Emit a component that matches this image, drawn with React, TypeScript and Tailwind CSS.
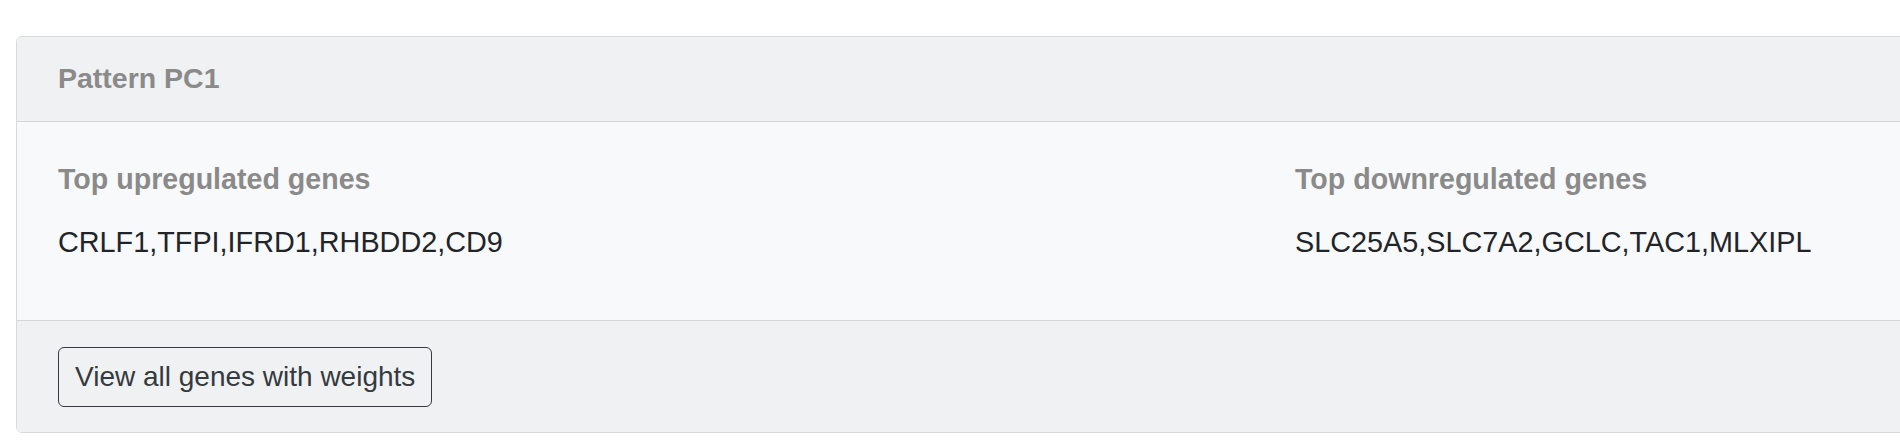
export default function App() {
  const up = ["CRLF1", "TFPI", "IFRD1", "RHBDD2", "CD9"];
  const down = ["SLC25A5", "SLC7A2", "GCLC", "TAC1", "MLXIPL"];

  return (
    <div className="w-[1900px] h-[446px] overflow-hidden bg-white font-['Liberation_Sans',Arial,sans-serif]">
      <div className="pt-[36px] pl-[16px]">
        {/* Pattern card, wider than the viewport */}
        <div className="w-[2600px] rounded-[6px] border border-[#d9dadc] overflow-hidden">
          <div className="bg-[#f0f1f2] border-b border-[#d4d6d8] px-[41px] pt-[24px] pb-[26px]">
            <h3 className="text-[28.5px] leading-[34px] font-bold text-[#8a8a8a]">Pattern PC1</h3>
          </div>

          <div className="bg-[#f8f9fa] px-[41px] pt-[40px] pb-[56px] grid grid-cols-[1237px_1fr]">
            <div>
              <h4 className="text-[28.6px] leading-[34px] font-bold text-[#8a8a8a] mb-[25px]">Top upregulated genes</h4>
              <p className="text-[28.8px] leading-[43px] text-[#212529]">{up.join(",")}</p>
            </div>
            <div>
              <h4 className="text-[28.6px] leading-[34px] font-bold text-[#8a8a8a] mb-[25px]">Top downregulated genes</h4>
              <p className="text-[28.8px] leading-[43px] text-[#212529]">{down.join(",")}</p>
            </div>
          </div>

          <div className="bg-[#f0f1f2] border-t border-[#d4d6d8] px-[41px] pt-[26px] pb-[25px]">
            <button className="border border-[#343a40] rounded-[6px] px-[16px] py-[11px] text-[28px] leading-[36px] text-[#343a40] bg-transparent">
              View all genes with weights
            </button>
          </div>
        </div>
      </div>
    </div>
  );
}
